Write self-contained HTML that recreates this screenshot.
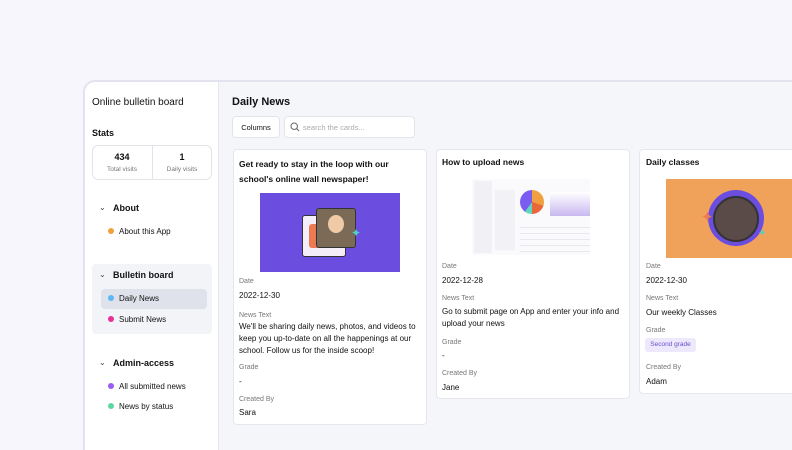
<!DOCTYPE html><html style="width:792px;height:450px;overflow:hidden"><head><style>
*{margin:0;padding:0;box-sizing:border-box}
body{width:792px;height:450px;overflow:hidden;background:#f7f6fd;font-family:"Liberation Sans",sans-serif;color:#111;position:relative}
.a{position:absolute}
.frame{left:83px;top:80px;width:720px;height:390px;border:2px solid #e3e2ef;border-radius:12px 0 0 0;background:#f5f6fa;overflow:hidden}
.side{left:85px;top:82px;width:134px;height:380px;background:#fff;border-right:1px solid #e6e7ee;border-radius:10px 0 0 0}
.t{font-size:9.5px;font-weight:bold}
.s{font-size:8px}
.l{font-size:7px;color:#777}
.dot{width:6px;height:6px;border-radius:50%;display:inline-block}
.card{background:#fff;border:1px solid #e6e7ee;border-radius:4px}
.ch{font-size:8.5px;font-weight:bold}
.chev{font-size:8px;color:#444}
</style></head><body>
<div class="a frame"></div>
<div class="a side"></div>
<div class="a" style="left:92px;top:97px;font-size:10px;font-weight:500">Online bulletin board</div>
<div class="a t" style="left:92px;top:128px;font-size:9px">Stats</div>
<div class="a" style="left:92px;top:145px;width:120px;height:35px;border:1px solid #e3e4ea;border-radius:6px"></div>
<div class="a" style="left:152px;top:145px;width:1px;height:35px;background:#e3e4ea"></div>
<div class="a" style="left:92px;top:152px;width:60px;text-align:center;font-size:9px;font-weight:bold">434</div>
<div class="a l" style="left:92px;top:166px;width:60px;text-align:center;font-size:6.5px">Total visits</div>
<div class="a" style="left:152px;top:152px;width:60px;text-align:center;font-size:9px;font-weight:bold">1</div>
<div class="a l" style="left:152px;top:166px;width:60px;text-align:center;font-size:6.5px">Daily visits</div>
<div class="a chev" style="left:99px;top:203px">⌄</div>
<div class="a t" style="left:113px;top:203px;font-size:9px">About</div>
<div class="a s" style="left:108px;top:227px"><span class="dot" style="background:#f0a13c;margin-right:5px"></span>About this App</div>
<div class="a" style="left:92px;top:264px;width:120px;height:70px;background:#f3f4f8;border-radius:4px"></div>
<div class="a chev" style="left:99px;top:270px">⌄</div>
<div class="a t" style="left:113px;top:270px;font-size:9px">Bulletin board</div>
<div class="a" style="left:101px;top:289px;width:106px;height:20px;background:#dfe2eb;border-radius:4px"></div>
<div class="a s" style="left:108px;top:294px"><span class="dot" style="background:#5cb8f5;margin-right:5px"></span>Daily News</div>
<div class="a s" style="left:108px;top:315px"><span class="dot" style="background:#e8309a;margin-right:5px"></span>Submit News</div>
<div class="a chev" style="left:99px;top:358px">⌄</div>
<div class="a t" style="left:113px;top:358px;font-size:9px">Admin-access</div>
<div class="a s" style="left:108px;top:382px"><span class="dot" style="background:#9b5cf0;margin-right:5px"></span>All submitted news</div>
<div class="a s" style="left:108px;top:402px"><span class="dot" style="background:#5fd6a0;margin-right:5px"></span>News by status</div>

<div class="a" style="left:232px;top:96px;font-size:11px;font-weight:bold">Daily News</div>
<div class="a" style="left:232px;top:116px;width:48px;height:22px;background:#fff;border:1px solid #e3e4ea;border-radius:4px;font-size:7.5px;font-weight:500;text-align:center;line-height:21px">Columns</div>
<div class="a" style="left:284px;top:116px;width:131px;height:22px;background:#fff;border:1px solid #e3e4ea;border-radius:4px"></div>
<svg class="a" style="left:290px;top:122px" width="10" height="10" viewBox="0 0 10 10"><circle cx="4.2" cy="4.2" r="3.2" fill="none" stroke="#666" stroke-width="1"/><path d="M6.6 6.6 9 9" stroke="#666" stroke-width="1"/></svg>
<div class="a" style="left:303px;top:123px;font-size:7.5px;color:#aaa">search the cards...</div>

<div class="a card" style="left:233px;top:149px;width:194px;height:276px"></div>
<div class="a ch" style="left:239px;top:157px;width:180px;line-height:15px">Get ready to stay in the loop with our school's online wall newspaper!</div>
<div class="a" style="left:260px;top:193px;width:140px;height:79px;background:#6b4ee0"></div>
<div class="a" style="left:302px;top:215px;width:44px;height:42px;background:#f4eef8;border:1px solid #333;border-radius:3px"></div>
<div class="a" style="left:309px;top:224px;width:30px;height:24px;background:#ec7a52;border-radius:3px"></div>
<div class="a" style="left:316px;top:208px;width:40px;height:40px;background:#7b6a55;border-radius:3px;border:1px solid #333"></div>
<div class="a" style="left:328px;top:215px;width:16px;height:18px;background:#f0c9a6;border-radius:50%"></div>
<div class="a" style="left:351px;top:226px;color:#4fd1c5;font-size:12px">✦</div>
<div class="a l" style="left:239px;top:278px">Date</div>
<div class="a s" style="left:239px;top:291px">2022-12-30</div>
<div class="a l" style="left:239px;top:312px">News Text</div>
<div class="a s" style="left:239px;top:321px;width:182px;line-height:12px">We'll be sharing daily news, photos, and videos to keep you up-to-date on all the happenings at our school. Follow us for the inside scoop!</div>
<div class="a l" style="left:239px;top:364px">Grade</div>
<div class="a s" style="left:239px;top:377px">-</div>
<div class="a l" style="left:239px;top:396px">Created By</div>
<div class="a s" style="left:239px;top:408px">Sara</div>

<div class="a card" style="left:436px;top:149px;width:194px;height:250px"></div>
<div class="a ch" style="left:442px;top:157px">How to upload news</div>
<div class="a" style="left:472px;top:179px;width:118px;height:76px;background:#fafafd"></div>
<div class="a" style="left:474px;top:181px;width:18px;height:72px;background:#f0f0f5"></div>
<div class="a" style="left:495px;top:190px;width:20px;height:60px;background:#f2f2f6"></div>
<div class="a" style="left:520px;top:190px;width:24px;height:24px;border-radius:50%;background:conic-gradient(#f0a040 0 30%,#e8683a 0 50%,#5fd6c0 0 60%,#7a5cf0 0)"></div>
<div class="a" style="left:550px;top:192px;width:40px;height:24px;background:linear-gradient(#fff,#c9b8f0)"></div>
<div class="a" style="left:520px;top:222px;width:70px;height:32px;background:repeating-linear-gradient(#fafafd 0 5px,#e8e8ef 5px 6px)"></div>
<div class="a l" style="left:442px;top:263px">Date</div>
<div class="a s" style="left:442px;top:276px">2022-12-28</div>
<div class="a l" style="left:442px;top:295px">News Text</div>
<div class="a s" style="left:442px;top:306px;width:182px;line-height:12px">Go to submit page on App and enter your info and upload your news</div>
<div class="a l" style="left:442px;top:339px">Grade</div>
<div class="a s" style="left:442px;top:351px">-</div>
<div class="a l" style="left:442px;top:370px">Created By</div>
<div class="a s" style="left:442px;top:383px">Jane</div>

<div class="a card" style="left:639px;top:149px;width:160px;height:245px"></div>
<div class="a ch" style="left:646px;top:157px">Daily classes</div>
<div class="a" style="left:666px;top:179px;width:126px;height:79px;background:#f0a25a"></div>
<div class="a" style="left:708px;top:190px;width:56px;height:56px;border-radius:50%;background:#6b4ee0"></div>
<div class="a" style="left:713px;top:196px;width:46px;height:46px;border-radius:50%;background:#5a4a48;border:2px solid #333"></div>
<div class="a" style="left:701px;top:208px;color:#ec7a52;font-size:15px">✦</div>
<div class="a" style="left:758px;top:228px;color:#4fd1c5;font-size:10px">✦</div>
<div class="a l" style="left:646px;top:263px">Date</div>
<div class="a s" style="left:646px;top:276px">2022-12-30</div>
<div class="a l" style="left:646px;top:295px">News Text</div>
<div class="a s" style="left:646px;top:308px">Our weekly Classes</div>
<div class="a l" style="left:646px;top:327px">Grade</div>
<div class="a" style="left:645px;top:338px;width:51px;height:14px;background:#ede8fb;border-radius:3px;font-size:6.5px;color:#6a4fd0;text-align:center;line-height:14px">Second grade</div>
<div class="a l" style="left:646px;top:364px">Created By</div>
<div class="a s" style="left:646px;top:377px">Adam</div>
</body></html>
